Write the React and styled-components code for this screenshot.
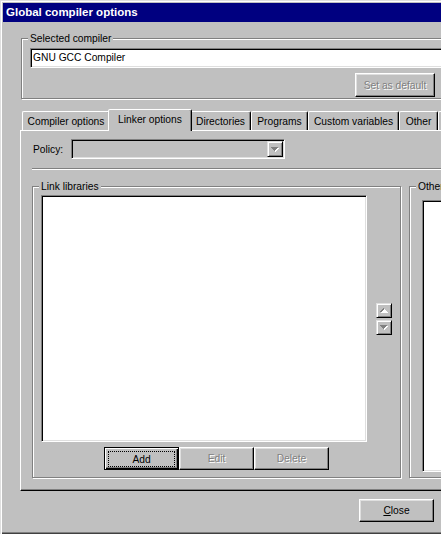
import React from 'react';
import styled, { createGlobalStyle, css } from 'styled-components';

const GlobalStyle = createGlobalStyle`
  html, body {
    margin: 0;
    padding: 0;
    background: #c0c0c0;
  }
  body {
    font-family: "Liberation Sans", Arial, sans-serif;
    font-size: 10.25px;
    color: #000;
  }
  #root {
    width: 441px;
    height: 534px;
    overflow: hidden;
  }
`;

const raised = css`
  border: 1px solid;
  border-color: #fff #000 #000 #fff;
  box-shadow: inset -1px -1px 0 #808080, inset 1px 1px 0 #dfdfdf;
`;

const sunken = css`
  border: 1px solid;
  border-color: #808080 #fff #fff #808080;
  box-shadow: inset 1px 1px 0 #000, inset -1px -1px 0 #dfdfdf;
`;

const Window = styled.div`
  box-sizing: border-box;
  width: 500px;
  height: 534px;
  padding: 3px;
  background: #c0c0c0;
  box-shadow: inset 1px 1px 0 #dfdfdf, inset 2px 2px 0 #fff,
    inset -1px -1px 0 #404040, inset -2px -2px 0 #808080;
  display: flex;
  flex-direction: column;
`;

const TitleBar = styled.div`
  height: 19px;
  line-height: 19px;
  padding-left: 3px;
  background: #000080;
  color: #fff;
  font-weight: bold;
  font-size: 11.5px;
  white-space: nowrap;
`;

const Client = styled.div`
  padding-top: 10px;
  display: flex;
  flex-direction: column;
`;

const GroupBox = styled.fieldset`
  box-sizing: border-box;
  margin: ${p => p.$margin || '0'};
  padding: 0;
  min-inline-size: 0;
  border: 1px solid #808080;
  box-shadow: inset 1px 1px 0 #fff, 1px 1px 0 #fff;
  flex: ${p => (p.$w ? 'none' : '1')};
  width: ${p => (p.$w ? `${p.$w}px` : 'auto')};
`;

const Legend = styled.legend`
  margin-left: 6px;
  padding: 0 2px;
  line-height: 13px;
  background: #c0c0c0;
  white-space: nowrap;
`;

const GroupBody = styled.div`
  padding: ${p => p.$pad};
  display: flex;
  flex-direction: column;
`;

const TextField = styled.div`
  ${sunken};
  box-sizing: border-box;
  height: 20px;
  padding: 0 2px;
  line-height: 18px;
  background: #fff;
  white-space: nowrap;
`;

const ButtonRow = styled.div`
  display: flex;
  justify-content: ${p => p.$justify || 'center'};
  margin: ${p => p.$margin || '0'};
`;

const Button = styled.button`
  ${raised};
  box-sizing: border-box;
  width: ${p => p.$w || 75}px;
  height: ${p => p.$h || 23}px;
  padding: 0;
  margin: 0;
  font: inherit;
  color: #000;
  background: #c0c0c0;
  display: flex;
  align-items: center;
  justify-content: center;
  white-space: nowrap;

  &:disabled {
    color: #808080;
    text-shadow: 1px 1px 0 #fff;
  }

  ${p =>
    p.$default &&
    css`
      border-color: #000;
      box-shadow: inset 1px 1px 0 #fff, inset -1px -1px 0 #000,
        inset -2px -2px 0 #808080;
    `}
`;

const FocusRing = styled.span`
  flex: 1;
  align-self: stretch;
  margin: 3px 3px 2px 3px;
  border: 1px dotted #000;
  display: flex;
  align-items: center;
  justify-content: center;
`;

const Tabs = styled.div`
  margin: 10px 17px 0 17px;
`;

const TabStrip = styled.div`
  display: flex;
  align-items: flex-end;
  height: 21px;
  padding-left: 2px;
`;

const Tab = styled.div`
  box-sizing: border-box;
  flex: none;
  width: ${p => p.$w}px;
  height: 19px;
  border: 1px solid;
  border-bottom: 0;
  border-color: #fff #000 transparent #fff;
  border-radius: 2px 2px 0 0;
  box-shadow: inset -1px 0 0 #808080;
  display: flex;
  align-items: center;
  justify-content: center;
  white-space: nowrap;
  overflow: hidden;

  ${p =>
    p.$active &&
    css`
      position: relative;
      z-index: 1;
      width: ${p.$w + 4}px;
      height: 22px;
      margin: 0 -2px -1px -2px;
      padding-bottom: 3px;
      background: #c0c0c0;
    `}
`;

const TabPanel = styled.div`
  border: 1px solid;
  border-color: #fff #000 #000 #fff;
  box-shadow: inset -1px -1px 0 #808080;
  padding: 8px 12px 12px 11px;
`;

const PolicyRow = styled.div`
  display: flex;
  align-items: center;
`;

const FieldLabel = styled.span`
  width: 39px;
  padding-left: 1px;
  box-sizing: border-box;
`;

const Combo = styled.div`
  ${sunken};
  box-sizing: border-box;
  width: 214px;
  height: 20px;
  padding: 1px;
  background: #c0c0c0;
  display: flex;
  justify-content: flex-end;
`;

const ArrowButton = styled.div`
  box-sizing: border-box;
  width: 16px;
  height: ${p => p.$h || 16}px;
  border: 1px solid;
  border-color: #dfdfdf #000 #000 #dfdfdf;
  box-shadow: inset 1px 1px 0 #fff, inset -1px -1px 0 #808080;
  background: #c0c0c0;
  display: flex;
  align-items: center;
  justify-content: center;
`;

const Separator = styled.div`
  border-top: 1px solid #808080;
  border-bottom: 1px solid #fff;
  margin: 9px 0 10px 0;
`;

const Columns = styled.div`
  display: flex;
  align-items: stretch;
  gap: 8px;
`;

const ListRow = styled.div`
  display: flex;
  align-items: center;
  gap: 9px;
`;

const ListBox = styled.div`
  ${sunken};
  box-sizing: border-box;
  flex: none;
  width: ${p => (p.$w ? `${p.$w}px` : 'auto')};
  height: ${p => p.$h}px;
  background: #fff;
`;

const Spin = styled.div`
  display: flex;
  flex-direction: column;
  gap: 2px;
`;

const Footer = styled.div`
  display: flex;
  justify-content: flex-end;
  margin-top: 8px;
  padding-right: 63px;
`;

const Arrow = ({ up }) => (
  <svg width="8" height="5" viewBox="0 0 8 5" shapeRendering="crispEdges">
    {[0, 1, 2, 3].map(i => {
      const row = up ? 3 - i : i;
      return (
        <g key={i}>
          <rect x={i + 1} y={row + 1} width={7 - i * 2} height="1" fill="#fff" />
          <rect x={i} y={row} width={7 - i * 2} height="1" fill="#808080" />
        </g>
      );
    })}
  </svg>
);

const tabs = [
  { label: 'Compiler options', w: 88 },
  { label: 'Linker options', w: 80, active: true },
  { label: 'Directories', w: 61 },
  { label: 'Programs', w: 57 },
  { label: 'Custom variables', w: 91 },
  { label: 'Other', w: 39 },
  { label: 'Debugger', w: 60 },
];

export default function App() {
  return (
    <>
      <GlobalStyle />
      <Window>
        <TitleBar>Global compiler options</TitleBar>
        <Client>
          <GroupBox $margin="0 18px">
            <Legend>Selected compiler</Legend>
            <GroupBody $pad="3px 8px 1px 8px">
              <TextField>GNU GCC Compiler</TextField>
              <ButtonRow $justify="flex-end" $margin="5px 35px 0 0">
                <Button $w={80} $h={24} disabled>
                  Set as default
                </Button>
              </ButtonRow>
            </GroupBody>
          </GroupBox>

          <Tabs>
            <TabStrip>
              {tabs.map(t => (
                <Tab key={t.label} $w={t.w} $active={t.active}>
                  {t.label}
                </Tab>
              ))}
            </TabStrip>
            <TabPanel>
              <PolicyRow>
                <FieldLabel>Policy:</FieldLabel>
                <Combo>
                  <ArrowButton>
                    <Arrow />
                  </ArrowButton>
                </Combo>
              </PolicyRow>
              <Separator />
              <Columns>
                <GroupBox $w={369}>
                  <Legend>Link libraries</Legend>
                  <GroupBody $pad="2px 8px 7px 8px">
                    <ListRow>
                      <ListBox $w={326} $h={247} />
                      <Spin>
                        <ArrowButton $h={15}>
                          <Arrow up />
                        </ArrowButton>
                        <ArrowButton $h={15}>
                          <Arrow />
                        </ArrowButton>
                      </Spin>
                    </ListRow>
                    <ButtonRow $margin="5px 0 0 0">
                      <Button $default>
                        <FocusRing>Add</FocusRing>
                      </Button>
                      <Button disabled>Edit</Button>
                      <Button disabled>Delete</Button>
                    </ButtonRow>
                  </GroupBody>
                </GroupBox>
                <GroupBox>
                  <Legend>Other linker options</Legend>
                  <GroupBody $pad="7px 12px 5px 12px">
                    <ListBox $h={272} />
                  </GroupBody>
                </GroupBox>
              </Columns>
            </TabPanel>
          </Tabs>

          <Footer>
            <Button>
              <span>
                <u>C</u>lose
              </span>
            </Button>
          </Footer>
        </Client>
      </Window>
    </>
  );
}
